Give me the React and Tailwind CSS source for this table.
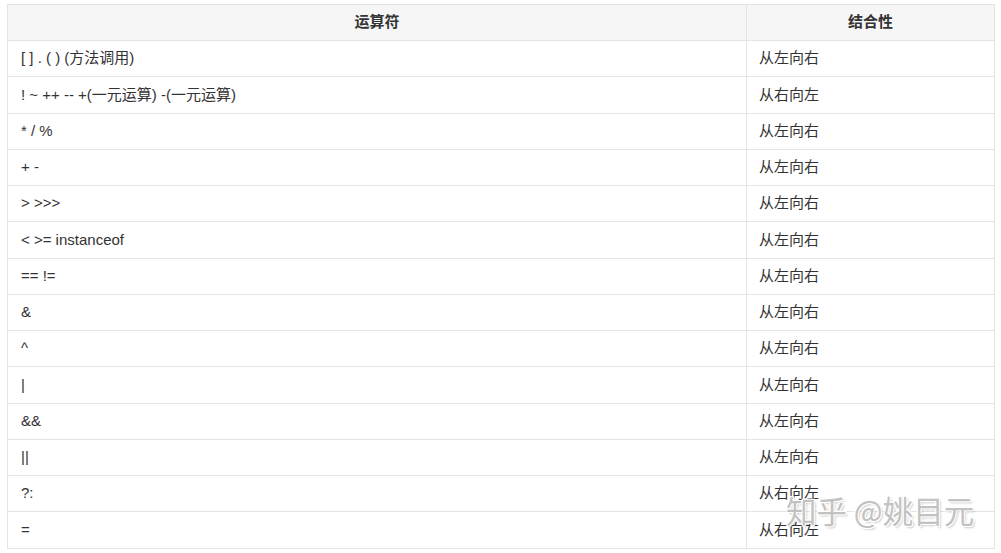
import React from "react";

const rows = [
  { op: "[ ] . ( ) (方法调用)", dir: "从左向右", h: "h-[36px]" },
  { op: "! ~ ++ -- +(一元运算) -(一元运算)", dir: "从右向左", h: "h-[37px]" },
  { op: "* / %", dir: "从左向右", h: "h-[36px]" },
  { op: "+ -", dir: "从左向右", h: "h-[36px]" },
  { op: "> >>>", dir: "从左向右", h: "h-[36px]" },
  { op: "< >= instanceof", dir: "从左向右", h: "h-[37px]" },
  { op: "== !=", dir: "从左向右", h: "h-[36px]" },
  { op: "&", dir: "从左向右", h: "h-[36px]" },
  { op: "^", dir: "从左向右", h: "h-[36px]" },
  { op: "|", dir: "从左向右", h: "h-[37px]" },
  { op: "&&", dir: "从左向右", h: "h-[36px]" },
  { op: "||", dir: "从左向右", h: "h-[36px]" },
  { op: "?:", dir: "从右向左", h: "h-[36px]" },
  { op: "=", dir: "从右向左", h: "h-[37px]" },
];

const App = () => {
  return (
    <div className="relative w-[1001px] h-[553px] bg-white overflow-hidden font-['Liberation_Sans','Noto_Sans_CJK_SC',sans-serif] text-[15px] text-[#333]">
      <div className="pt-[4px] pl-[7px]">
        <table className="table-fixed w-[987px] border-collapse">
          <colgroup>
            <col className="w-[739px]" />
            <col className="w-[248px]" />
          </colgroup>
          <thead>
            <tr className="h-[36px] bg-[#f6f6f6]">
              <th className="border border-[#e4e4e4] font-bold text-center">运算符</th>
              <th className="border border-[#e4e4e4] font-bold text-center">结合性</th>
            </tr>
          </thead>
          <tbody>
            {rows.map((r, i) => (
              <tr key={i} className={r.h}>
                <td className="border border-[#e4e4e4] pl-[13px] text-left">{r.op}</td>
                <td className="border border-[#e4e4e4] pl-[12px] text-left">{r.dir}</td>
              </tr>
            ))}
          </tbody>
        </table>
      </div>
      <div className="absolute left-[786px] top-[491px] text-[30.5px] leading-[38px] text-[#c2c2c2] whitespace-nowrap [text-shadow:1px_1px_0_#fff,-1px_-1px_0_#fff,1px_-1px_0_#fff,-1px_1px_0_#fff,2px_2px_2px_rgba(0,0,0,0.2)] font-['Noto_Sans_CJK_SC',sans-serif]">
        知乎 @姚目元
      </div>
    </div>
  );
};

export default App;
